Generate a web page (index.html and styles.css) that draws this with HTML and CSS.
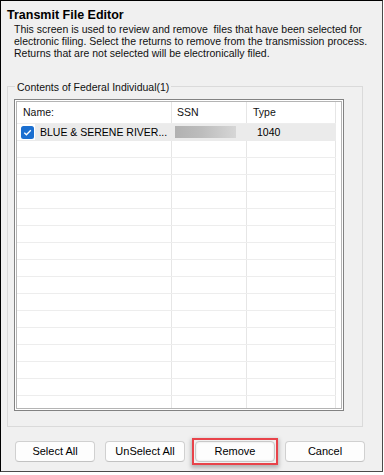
FILE: index.html
```html
<!DOCTYPE html>
<html lang="en">
<head>
<meta charset="UTF-8">
<meta name="viewport" content="width=device-width, initial-scale=1.0">
<title>Transmit File Editor</title>
<link rel="stylesheet" href="styles.css">
</head>
<body>
<div class="window">
  <div class="title">Transmit File Editor</div>
  <div class="desc">
    This screen is used to review and remove &nbsp;files that have been selected for<br>
    electronic filing. Select the returns to remove from the transmission process.<br>
    Returns that are not selected will be electronically filed.
  </div>

  <fieldset class="group">
    <legend>Contents of Federal Individual(1)</legend>
    <div class="list">
      <div class="list-inner">
        <div class="row head">
          <div class="cell name">Name:</div>
          <div class="cell ssn">SSN</div>
          <div class="cell type">Type</div>
        </div>
        <div class="row item">
          <div class="cell name">
            <span class="check">
              <svg width="13" height="13" viewBox="0 0 13 13">
                <rect x="0" y="0" width="13" height="13" rx="2.5" fill="#1b6fd0"/>
                <path d="M3.3 6.8 L5.4 8.8 L9.8 4.3" fill="none" stroke="#fff" stroke-width="1.3"/>
              </svg>
            </span>
            <span class="label">BLUE &amp; SERENE RIVER...</span>
          </div>
          <div class="cell ssn"><span class="masked"></span></div>
          <div class="cell type">1040</div>
        </div>
        <div class="row"><div class="cell name"></div><div class="cell ssn"></div><div class="cell type"></div></div>
        <div class="row"><div class="cell name"></div><div class="cell ssn"></div><div class="cell type"></div></div>
        <div class="row"><div class="cell name"></div><div class="cell ssn"></div><div class="cell type"></div></div>
        <div class="row"><div class="cell name"></div><div class="cell ssn"></div><div class="cell type"></div></div>
        <div class="row"><div class="cell name"></div><div class="cell ssn"></div><div class="cell type"></div></div>
        <div class="row"><div class="cell name"></div><div class="cell ssn"></div><div class="cell type"></div></div>
        <div class="row"><div class="cell name"></div><div class="cell ssn"></div><div class="cell type"></div></div>
        <div class="row"><div class="cell name"></div><div class="cell ssn"></div><div class="cell type"></div></div>
        <div class="row"><div class="cell name"></div><div class="cell ssn"></div><div class="cell type"></div></div>
        <div class="row"><div class="cell name"></div><div class="cell ssn"></div><div class="cell type"></div></div>
        <div class="row"><div class="cell name"></div><div class="cell ssn"></div><div class="cell type"></div></div>
        <div class="row"><div class="cell name"></div><div class="cell ssn"></div><div class="cell type"></div></div>
        <div class="row"><div class="cell name"></div><div class="cell ssn"></div><div class="cell type"></div></div>
        <div class="row"><div class="cell name"></div><div class="cell ssn"></div><div class="cell type"></div></div>
        <div class="row"><div class="cell name"></div><div class="cell ssn"></div><div class="cell type"></div></div>
        <div class="row"><div class="cell name"></div><div class="cell ssn"></div><div class="cell type"></div></div>
      </div>
    </div>
  </fieldset>

  <div class="buttons">
    <button class="btn">Select All</button>
    <button class="btn">UnSelect All</button>
    <span class="mark"><button class="btn">Remove</button></span>
    <button class="btn">Cancel</button>
  </div>
</div>
</body>
</html>
```

FILE: styles.css
```css
body {
  margin: 0;
  padding: 0;
  background-color: #fff;
  font-family: "Liberation Sans", Arial, sans-serif;
  color: #000;
}
.window {
  box-sizing: border-box;
  width: 383px;
  height: 472px;
  background-color: #f0f0f0;
  border-left: 1px solid #000;
  border-top: 1px solid #000;
  border-right: 1px solid #4a4a4a;
  border-bottom: 1px solid #4a4a4a;
  overflow: hidden;
}
.title {
  margin: 7px 0 0 6px;
  font-size: 12.5px;
  font-weight: bold;
  line-height: 14px;
}
.desc {
  margin: 1px 0 0 13px;
  font-size: 10.5px;
  line-height: 12.2px;
  white-space: nowrap;
  color: #111;
}
.group {
  margin: 21px 19px 0 6px;
  padding: 0 0 15px 0;
  border: 1px solid #dadada;
  min-width: 0;
}
.group legend {
  margin-left: 7px;
  padding: 0 2px;
  font-size: 10.5px;
  line-height: 12px;
  color: #111;
}
.list {
  box-sizing: border-box;
  width: 330px;
  height: 312px;
  margin: 6px 0 0 6px;
  padding: 2px;
  background-color: #fff;
  border: 1px solid #828282;
  box-shadow: inset 0 0 0 1px #fff, inset 0 0 0 2px #b4b4b4;
}
.list-inner {
  height: 100%;
  overflow: hidden;
  font-size: 10.5px;
}
.row {
  display: flex;
  width: 319px;
  height: 16px;
  border-bottom: 1px solid #ededed;
}
.cell {
  box-sizing: border-box;
  border-right: 1px solid #e6e6e6;
  line-height: 16px;
  white-space: nowrap;
}
.cell.name {
  width: 155px;
}
.cell.ssn {
  width: 75px;
}
.cell.type {
  width: 89px;
}
.row.head {
  height: 21px;
}
.row.head .cell {
  line-height: 21px;
  padding-left: 6px;
  color: #111;
}
.row.head .cell.ssn {
  padding-left: 5px;
}
.row.item {
  background-color: #ebebeb;
  border-bottom-color: #ebebeb;
}
.row.item .cell {
  border-right: none;
}
.row.item .cell.name {
  display: flex;
  align-items: center;
}
.check {
  display: flex;
  align-items: center;
  height: 16px;
  padding: 0 1px 0 4px;
  background-color: #fff;
}
.check svg {
  display: block;
  margin-top: 2px;
}
.label {
  padding-left: 5px;
}
.row.item .cell.ssn {
  display: flex;
  align-items: center;
  padding-left: 3px;
}
.masked {
  display: block;
  width: 61px;
  height: 12px;
  margin-top: 1px;
  background: linear-gradient(90deg, #b1b1b1, #bdbdbd 45%, #d6d6d6);
}
.row.item .cell.type {
  padding-left: 10px;
}
.buttons {
  display: flex;
  align-items: center;
  gap: 10px;
  margin: 11px 0 0 14px;
}
.btn {
  box-sizing: border-box;
  width: 80px;
  height: 21px;
  padding: 0;
  font-family: "Liberation Sans", Arial, sans-serif;
  font-size: 11px;
  color: #000;
  background-color: #fdfdfd;
  border: 1px solid #d0d0d0;
  border-bottom-color: #c2c2c2;
  border-radius: 4px;
}
.mark {
  display: flex;
  margin: 0 -3px;
  padding: 1px;
  border: 2px solid #e8434a;
  box-shadow: 0 2px 4px 1px rgba(0, 0, 0, 0.25);
}
.mark .btn {
  border-color: #c8c8c8;
  box-shadow: inset 0 0 2px rgba(0, 0, 0, 0.15);
}
```
